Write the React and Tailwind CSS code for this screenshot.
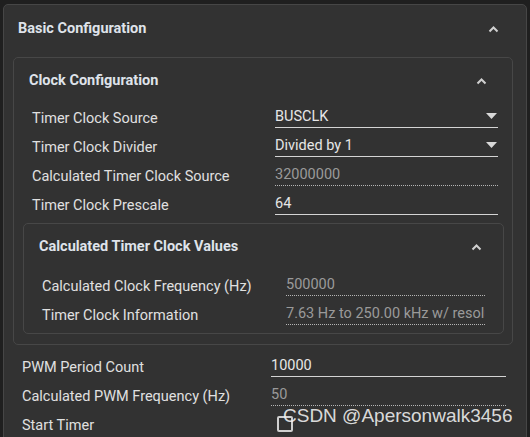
import React from 'react';

const Chevron = () => (
    <svg width="11" height="8" viewBox="0 0 11 8" className="shrink-0">
        <polyline points="1.5,6.5 5.5,2.5 9.5,6.5" fill="none" stroke="#d0d0d0" strokeWidth="2" />
    </svg>
);

const Caret = () => (
    <svg width="11" height="6" viewBox="0 0 11 6" className="shrink-0">
        <polygon points="0,0 11,0 5.5,6" fill="#d8d8d8" />
    </svg>
);

// editable / select / read-only field, drawn like the material underline inputs
function Field({ value, kind = 'input' }) {
    const readOnly = kind === 'readonly';
    return (
        <div
            className={
                'flex-1 min-w-0 flex items-center h-[20px] mt-[-2px] ' +
                (readOnly ? 'border-b border-dotted border-[#b5b5b5] text-[#9a9a9a]' : 'border-b border-[#d4d4d4] text-[#e6e6e6]')
            }
        >
            <span className="flex-1 whitespace-nowrap overflow-hidden">{value}</span>
            {kind === 'select' && (
                <span className="pr-[1px] pb-[3px]">
                    <Caret />
                </span>
            )}
        </div>
    );
}

function Row({ label, labelW, children }) {
    return (
        <div className="flex items-center h-[29px]">
            <div className={'shrink-0 text-[#e0e0e0] ' + labelW}>{label}</div>
            {children}
        </div>
    );
}

function Header({ title }) {
    return (
        <div className="flex items-center justify-between h-[46px]">
            <span className="font-bold text-[#dfe3ea]">{title}</span>
            <Chevron />
        </div>
    );
}

export default function App() {
    return (
        <div
            className="w-[530px] h-[437px] overflow-hidden bg-[#1f1f1f] pt-[4px] pl-[3px] relative text-[14.5px] leading-[18px]"
            style={{ fontFamily: 'Roboto, "Liberation Sans", sans-serif' }}
        >
            <div className="w-[524px] h-[460px] bg-[#323232] border border-[#464646] rounded-[5px]">
                {/* Basic Configuration */}
                <div className="flex items-center justify-between h-[52px] pb-[4px] pl-[14px] pr-[27px]">
                    <span className="font-bold text-[#dfe3ea]">Basic Configuration</span>
                    <Chevron />
                </div>

                {/* Clock Configuration */}
                <div className="ml-[9px] w-[500px] bg-[#323232] border border-[#474747] rounded-[5px] pl-[15px] pr-[9px] pb-[10px]">
                    <div className="pr-[16px]">
                        <Header title="Clock Configuration" />
                    </div>
                    <div className="pl-[3px] pr-[5px]">
                        <Row label="Timer Clock Source" labelW="w-[243px]">
                            <Field value="BUSCLK" kind="select" />
                        </Row>
                        <Row label="Timer Clock Divider" labelW="w-[243px]">
                            <Field value="Divided by 1" kind="select" />
                        </Row>
                        <Row label="Calculated Timer Clock Source" labelW="w-[243px]">
                            <Field value="32000000" kind="readonly" />
                        </Row>
                        <Row label="Timer Clock Prescale" labelW="w-[243px]">
                            <Field value="64" />
                        </Row>
                    </div>

                    {/* Calculated Timer Clock Values */}
                    <div className="mt-[3px] ml-[-6px] w-[481px] border border-[#474747] rounded-[5px] pl-[15px] pr-[18px] pb-[3px]">
                        <div className="pr-[3px]">
                            <Header title="Calculated Timer Clock Values" />
                        </div>
                        <div className="pl-[3px] pt-[2px]">
                            <Row label="Calculated Clock Frequency (Hz)" labelW="w-[244px]">
                                <Field value="500000" kind="readonly" />
                            </Row>
                            <Row label="Timer Clock Information" labelW="w-[244px]">
                                <Field value="7.63 Hz to 250.00 kHz w/ resolution 2.00 us" kind="readonly" />
                            </Row>
                        </div>
                    </div>
                </div>

                {/* PWM rows */}
                <div className="pt-[8px] pl-[18px] pr-[20px]">
                    <Row label="PWM Period Count" labelW="w-[249px]">
                        <Field value="10000" />
                    </Row>
                    <Row label="Calculated PWM Frequency (Hz)" labelW="w-[249px]">
                        <Field value="50" kind="readonly" />
                    </Row>
                    <Row label="Start Timer" labelW="w-[255px]">
                        <div className="w-[16px] h-[16px] mt-[-3px] border-2 border-[#cfcfcf] rounded-[2px]" />
                    </Row>
                </div>
            </div>

            <div
                className="absolute left-[283px] top-[404px] text-[19px] leading-[24px] text-[#f0f0f0]/90 whitespace-nowrap"
                style={{ fontFamily: '"Liberation Sans", Arial, sans-serif' }}
            >
                CSDN @Apersonwalk3456
            </div>
        </div>
    );
}
